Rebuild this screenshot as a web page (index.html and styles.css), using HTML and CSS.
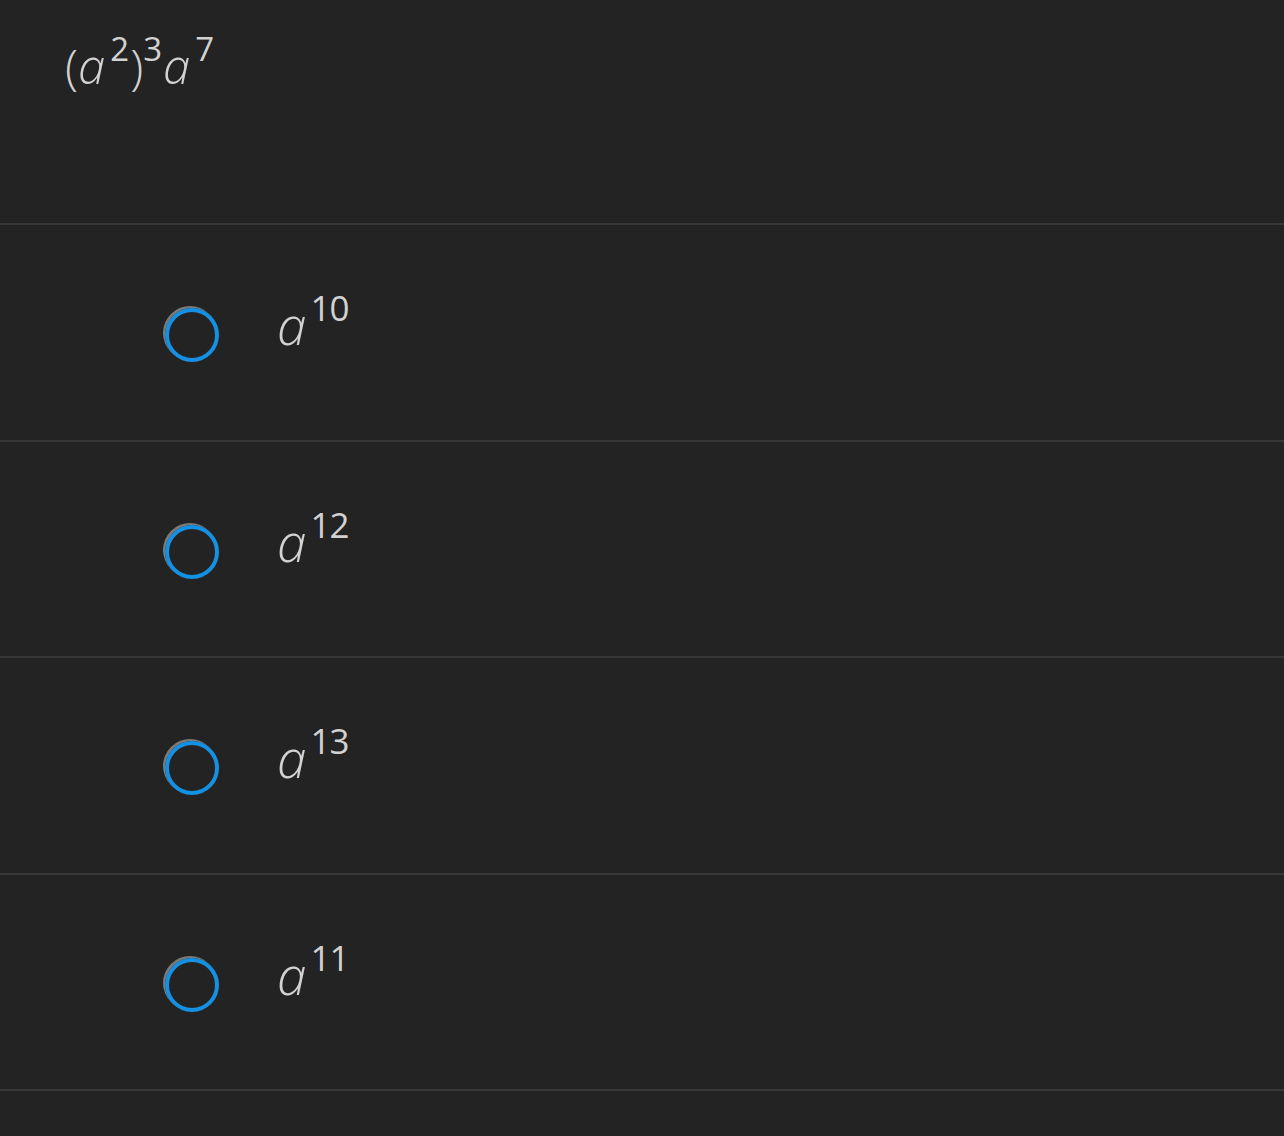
FILE: index.html
```html
<!DOCTYPE html>
<html lang="en">
<head>
<meta charset="utf-8">
<title>Question</title>
<link rel="stylesheet" href="styles.css">
</head>
<body>
<main class="quiz">
  <section class="question">
    <span class="math title-math"><span class="paren">(</span><i class="var">a</i><sup class="sup">2</sup><span class="paren">)</span><sup class="sup">3</sup><i class="var">a</i><sup class="sup">7</sup></span>
  </section>
  <ul class="options">
    <li class="option"><span class="radio"></span><span class="math opt-math"><i class="var">a</i><sup class="sup">10</sup></span></li>
    <li class="option"><span class="radio"></span><span class="math opt-math"><i class="var">a</i><sup class="sup">12</sup></span></li>
    <li class="option"><span class="radio"></span><span class="math opt-math"><i class="var">a</i><sup class="sup">13</sup></span></li>
    <li class="option"><span class="radio"></span><span class="math opt-math"><i class="var">a</i><sup class="sup">11</sup></span></li>
  </ul>
</main>
</body>
</html>
```
FILE: styles.css
```css
html, body {
  margin: 0;
  padding: 0;
  background: #232323;
}
body {
  color: #d2d2d2;
  font-family: "Open Sans", "Noto Sans", sans-serif;
  min-height: 1136px;
}
.quiz {
  display: flex;
  flex-direction: column;
}
.question {
  box-sizing: border-box;
  height: 225px;
  padding: 35px 0 0 65px;
  border-bottom: 2px solid #373737;
}
.math {
  display: inline-flex;
  align-items: baseline;
  white-space: nowrap;
}
.title-math {
  font-size: 49px;
  line-height: 60px;
}
.title-math .paren {
  font-size: 48px;
  font-weight: 300;
}
.title-math .var {
  font-style: italic;
  font-weight: 300;
  margin-right: 5px;
}
.title-math .sup {
  font-size: 33px;
  position: relative;
  top: -23px;
  vertical-align: baseline;
  line-height: 1;
  margin-right: 2px;
  letter-spacing: -1px;
}
.options {
  list-style: none;
  margin: 0;
  padding: 0;
}
.option {
  height: 214.5px;
  border-bottom: 2px solid #373737;
  display: flex;
  align-items: center;
  padding-left: 165px;
  gap: 58px;
}
.radio {
  width: 54px;
  height: 54px;
  box-sizing: border-box;
  border: 4px solid #1590e2;
  border-radius: 50%;
  box-shadow: -2px -2px 0 0 #7a7a7a;
  flex: none;
  margin-top: 6px;
}
.opt-math {
  font-size: 53px;
  line-height: 60px;
  margin-top: -14px;
}
.opt-math .var {
  font-style: italic;
  font-weight: 300;
  margin-right: 4px;
}
.opt-math .sup {
  font-size: 35px;
  position: relative;
  top: -24px;
  vertical-align: baseline;
  line-height: 1;
  letter-spacing: -1px;
}
```
